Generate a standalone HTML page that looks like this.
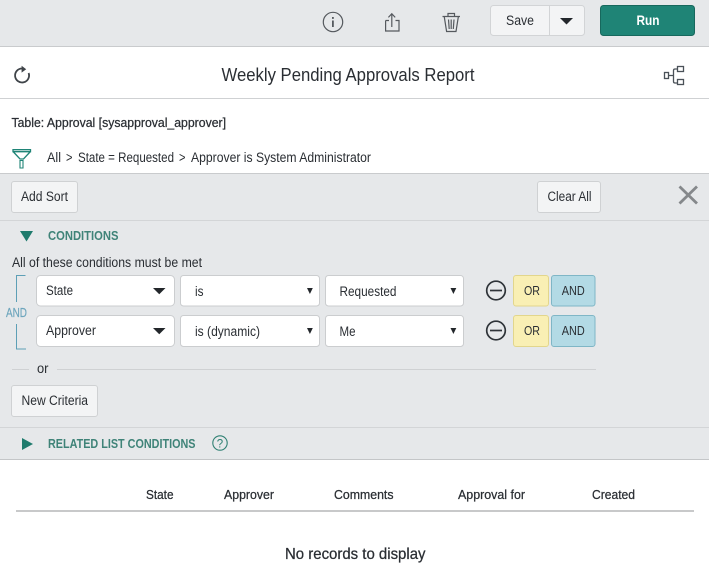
<!DOCTYPE html>
<html><head><meta charset="utf-8"><style>
html,body{margin:0;padding:0;background:#fff;width:709px;height:576px;overflow:hidden}
svg{display:block}
text{font-family:"Liberation Sans",sans-serif;font-size:13.5px;fill:#2a2e33}
.sb{stroke:#2a2e33;stroke-width:.25px}
</style></head><body>
<svg width="709" height="576" viewBox="0 0 709 576" xmlns="http://www.w3.org/2000/svg">
<rect width="709" height="576" fill="#fff"/>
<rect width="709" height="46" fill="#e6e8ea"/>
<rect y="46" width="709" height="1" fill="#c9cbcd"/>
<rect y="98" width="709" height="1" fill="#cfd1d3"/>
<rect y="173" width="709" height="287" fill="#e6e8ea"/>
<rect y="173" width="709" height="1" fill="#c9cbcd"/>
<rect y="220" width="709" height="1" fill="#d3d5d7"/>
<rect y="427" width="709" height="1" fill="#d3d5d7"/>
<rect y="459" width="709" height="1" fill="#c4c6c8"/>

<!-- toolbar icons -->
<g fill="none" stroke="#55595e" stroke-width="1.2">
<circle cx="333" cy="22" r="9.7"/>
<path d="M385.6 20.500v10.500h13.400v-10.500h-3.500M389 20.500h-3.400M391.800 27v-13M388.400 17.400l3.400-3.700 3.400 3.700"/>
<path d="M442.500 16.500h17.500M448 16v-2.500h6.500v2.500M444.300 17l2.300 14.500h9.400l2.300-14.500M448.500 19.500l.7 9.500M451.200 19.500v9.500M454 19.500l-.7 9.500"/>
</g>
<path d="M332 20.500h1.800v6.500H332zM332 17h1.800v1.900H332z" fill="#55595e"/>

<rect x="490.500" y="5.500" width="94" height="30" rx="3" fill="#f3f4f5" stroke="#d2d4d6"/>
<rect x="549" y="6" width="1" height="29" fill="#d2d4d6"/>
<text x="506" y="25" textLength="28" lengthAdjust="spacingAndGlyphs">Save</text>
<path d="M560 18h13l-6.500 6.500z" fill="#23272b"/>
<rect x="600.500" y="5.500" width="94" height="30" rx="3" fill="#1f8476" stroke="#17685d"/>
<text x="636.500" y="25" textLength="23" lengthAdjust="spacingAndGlyphs" style="fill:#fff;font-weight:bold;font-size:14px">Run</text>

<!-- header row -->
<path d="M22 68.500A7 7 0 1 0 28.600 73" fill="none" stroke="#3f4449" stroke-width="1.800"/>
<path d="M21.600 65.800v6.800l4.600-3.400z" fill="#3f4449"/>
<text x="221.500" y="81" textLength="253" lengthAdjust="spacingAndGlyphs" style="font-size:18px">Weekly Pending Approvals Report</text>
<g fill="none" stroke="#4a5158" stroke-width="1.300">
<rect x="664.500" y="72.500" width="4" height="6"/>
<rect x="677.500" y="66.500" width="6" height="5"/>
<rect x="677.500" y="79.500" width="6" height="5"/>
<path d="M668.500 75.500h5M677.500 69h-2.500q-1.500 0-1.500 1.500v11q0 1.500 1.500 1.500h2.500"/>
</g>

<!-- table / breadcrumb -->
<text x="11.500" y="127" textLength="214.500" lengthAdjust="spacingAndGlyphs" class="sb" style="font-size:13px">Table: Approval [sysapproval_approver]</text>
<g fill="none" stroke="#1f8476" stroke-width="1.300">
<path d="M13 149.700h17.500v2H13zM13.500 152l6.500 7h3.500l6.500-7"/>
<path d="M20 160.500h3v7.500h-3z" stroke-width="1.100"/>
</g>
<text x="47" y="162" textLength="14" lengthAdjust="spacingAndGlyphs">All</text>
<text x="66" y="162" textLength="6.500" lengthAdjust="spacingAndGlyphs">&gt;</text>
<text x="78" y="162" textLength="96" lengthAdjust="spacingAndGlyphs">State = Requested</text>
<text x="179" y="162" textLength="6.500" lengthAdjust="spacingAndGlyphs">&gt;</text>
<text x="191" y="162" textLength="180" lengthAdjust="spacingAndGlyphs">Approver is System Administrator</text>

<!-- filter bar -->
<rect x="11.500" y="181.500" width="66" height="31" rx="2.500" fill="#f3f4f5" stroke="#cfd1d3"/>
<text x="21" y="201" textLength="47" lengthAdjust="spacingAndGlyphs">Add Sort</text>
<rect x="537.500" y="181.500" width="63" height="31" rx="2.500" fill="#f3f4f5" stroke="#cfd1d3"/>
<text x="547.500" y="201" textLength="44" lengthAdjust="spacingAndGlyphs">Clear All</text>
<path d="M679.500 186.500l17.500 17M697 186.500l-17.500 17" stroke="#85888b" stroke-width="2.800" fill="none"/>

<path d="M20 231h13l-6.500 10.500z" fill="#1f7b6d"/>
<text x="48" y="240" textLength="70.500" lengthAdjust="spacingAndGlyphs" style="font-size:13px;font-weight:bold;fill:#3f8378">CONDITIONS</text>
<text x="12" y="267" textLength="190" lengthAdjust="spacingAndGlyphs">All of these conditions must be met</text>

<!-- bracket -->
<path d="M25.500 275.500h-9v26.500M16.500 324v25h9.500" fill="none" stroke="#5d9fb6" stroke-width="1"/>
<text x="6" y="317" textLength="21" lengthAdjust="spacingAndGlyphs" style="font-size:12.500px;fill:#6ea6bd;stroke:#6ea6bd;stroke-width:.2px">AND</text>

<!-- rows -->
<g fill="#fff" stroke="#cbcdcf">
<rect x="36.500" y="275.500" width="138" height="30.500" rx="4"/>
<rect x="180.500" y="275.500" width="139" height="30.500" rx="3"/>
<rect x="325.500" y="275.500" width="138" height="30.500" rx="3"/>
<rect x="36.500" y="315.500" width="138" height="31" rx="4"/>
<rect x="180.500" y="315.500" width="139" height="31" rx="3"/>
<rect x="325.500" y="315.500" width="138" height="31" rx="3"/>
</g>
<text x="46" y="295" textLength="27" lengthAdjust="spacingAndGlyphs">State</text>
<text x="46" y="335" textLength="50" lengthAdjust="spacingAndGlyphs">Approver</text>
<text x="195" y="296" textLength="8.500" lengthAdjust="spacingAndGlyphs">is</text>
<text x="195" y="336" textLength="65" lengthAdjust="spacingAndGlyphs">is (dynamic)</text>
<text x="339.500" y="296" textLength="57" lengthAdjust="spacingAndGlyphs">Requested</text>
<text x="339.500" y="336" textLength="16" lengthAdjust="spacingAndGlyphs">Me</text>
<g fill="#23272b">
<path d="M153 288h12.500l-6.250 6.200z"/>
<path d="M153 328h12.500l-6.250 6.200z"/>
<path d="M307 288h5.800l-2.900 6z"/>
<path d="M307 328h5.800l-2.900 6z"/>
<path d="M450.500 288h5.800l-2.900 6z"/>
<path d="M450.500 328h5.800l-2.900 6z"/>
</g>
<g fill="none" stroke="#2e3338" stroke-width="1.700">
<circle cx="496" cy="290.500" r="9.300"/><path d="M490 290.500h12"/>
<circle cx="496" cy="330.500" r="9.300"/><path d="M490 330.500h12"/>
</g>
<g fill="#f9efb4" stroke="#e2d68c">
<rect x="513.500" y="275.500" width="35" height="30.500" rx="2.500"/>
<rect x="513.500" y="315.500" width="35" height="31" rx="2.500"/>
</g>
<g fill="#b3dae5" stroke="#7fb6c6">
<rect x="551.500" y="275.500" width="43.500" height="30.500" rx="2.500"/>
<rect x="551.500" y="315.500" width="43.500" height="31" rx="2.500"/>
</g>
<text x="524" y="295" textLength="16" lengthAdjust="spacingAndGlyphs" style="font-size:13px">OR</text>
<text x="524" y="335" textLength="16" lengthAdjust="spacingAndGlyphs" style="font-size:13px">OR</text>
<text x="561.700" y="295" textLength="23" lengthAdjust="spacingAndGlyphs" style="font-size:13px">AND</text>
<text x="561.700" y="335" textLength="23" lengthAdjust="spacingAndGlyphs" style="font-size:13px">AND</text>

<!-- or -->
<rect x="12" y="369" width="17" height="1" fill="#cfd1d3"/>
<rect x="57" y="369" width="539" height="1" fill="#cfd1d3"/>
<text x="37" y="373" textLength="11.500" lengthAdjust="spacingAndGlyphs">or</text>
<rect x="11.500" y="385.500" width="86" height="31" rx="2.500" fill="#f3f4f5" stroke="#cfd1d3"/>
<text x="21.500" y="405" textLength="66.500" lengthAdjust="spacingAndGlyphs">New Criteria</text>

<!-- related -->
<path d="M22 438l11 6-11 6z" fill="#1f7b6d"/>
<text x="48" y="448" textLength="147.500" lengthAdjust="spacingAndGlyphs" style="font-size:13px;font-weight:bold;fill:#3f8378">RELATED LIST CONDITIONS</text>
<circle cx="220" cy="443" r="7.200" fill="none" stroke="#2f8073" stroke-width="1.100"/>
<text x="216.800" y="447.500" textLength="6.400" lengthAdjust="spacingAndGlyphs" style="font-size:12px;fill:#2f8073">?</text>

<!-- list -->
<g class="sb">
<text x="146" y="499" textLength="27.500" lengthAdjust="spacingAndGlyphs" style="font-size:13px">State</text>
<text x="224" y="499" textLength="50" lengthAdjust="spacingAndGlyphs" style="font-size:13px">Approver</text>
<text x="334" y="499" textLength="59.500" lengthAdjust="spacingAndGlyphs" style="font-size:13px">Comments</text>
<text x="458" y="499" textLength="67" lengthAdjust="spacingAndGlyphs" style="font-size:13px">Approval for</text>
<text x="592" y="499" textLength="43" lengthAdjust="spacingAndGlyphs" style="font-size:13px">Created</text>
</g>
<rect x="16" y="510" width="678" height="2" fill="#c8c9ca"/>
<text x="285" y="559" textLength="140.500" lengthAdjust="spacingAndGlyphs" class="sb" style="font-size:16px">No records to display</text>
</svg>
</body></html>
